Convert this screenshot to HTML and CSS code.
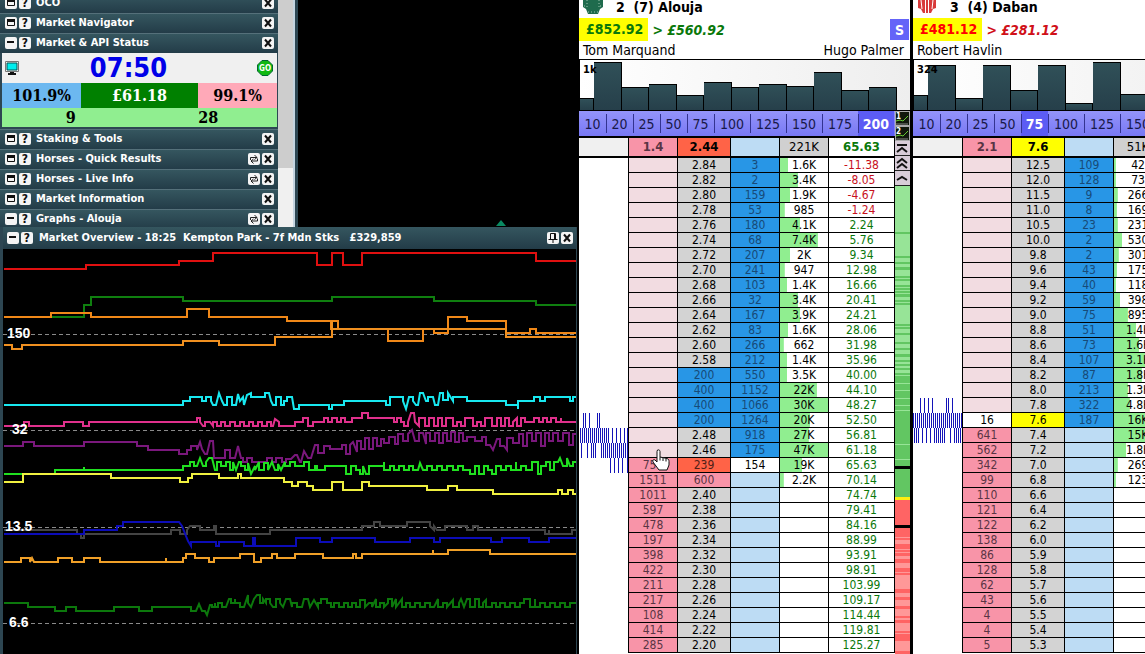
FILE: index.html
```html
<!DOCTYPE html>
<html lang="en">
<head>
    <meta charset="UTF-8">
    <meta name="viewport" content="width=device-width, initial-scale=1.0">
    <title>Market Overview</title>
    <link rel="stylesheet" href="styles.css">
</head>
<body>
    <svg class="symbols" aria-hidden="true">
        <symbol id="restore" viewBox="0 0 12 12"><path d="M2.5 2.5h7v6h-7z" fill="none" stroke="#111"/><path d="M2 2h8v3H2z" fill="#111"/></symbol>
        <symbol id="minimise" viewBox="0 0 12 12"><path d="M2 4h7v2H2z" fill="#111"/></symbol>
        <symbol id="close" viewBox="0 0 12 12"><path d="M3 2.5l6 7M9 2.5l-6 7" stroke="#111" stroke-width="2"/></symbol>
        <symbol id="swap" viewBox="0 0 12 12"><path d="M2.500 7V4.500H9M6.500 2L9 4.500 6.500 6.500M9.500 5.500V8H3M5.500 6L3 8l2.500 2.500" fill="none" stroke="#222"/></symbol>
        <symbol id="pin" viewBox="0 0 12 12"><path d="M3.500 7V1.500h5V7M1.500 7.500h9M6 7.500V11" fill="none" stroke="#111"/><path d="M7 2h1.500v5H7z" fill="#111"/></symbol>
    </svg>

    <div class="desk">
        <div class="top">
            <div class="panels">
                <div class="bar">
                    <button aria-label="Restore"><svg><use href="#restore"/></svg></button><button>?</button>
                    <h2>OCO</h2>
                    <button aria-label="Close"><svg><use href="#close"/></svg></button>
                </div>
                <div class="bar">
                    <button aria-label="Restore"><svg><use href="#restore"/></svg></button><button>?</button>
                    <h2>Market Navigator</h2>
                    <button aria-label="Close"><svg><use href="#close"/></svg></button>
                </div>
                <div class="bar">
                    <button aria-label="Minimise"><svg><use href="#minimise"/></svg></button><button>?</button>
                    <h2>Market &amp; API Status</h2>
                    <button aria-label="Close"><svg><use href="#close"/></svg></button>
                </div>
                <div class="status">
                    <div class="clock">
                        <svg width="16" height="16" viewBox="0 0 16 16"><path d="M1.500 1.500h13v10h-13z" fill="#eee" stroke="#777"/><path d="M3 3h10v7H3z" fill="#0ee" stroke="#055"/><path d="M6 12h4v1h2v2H4v-2h2z" fill="#111"/></svg>
                        <span class="time">07:50</span>
                        <svg width="16" height="16" viewBox="0 0 16 16"><path d="M5 .5h6L15.500 5v6L11 15.500H5L.5 11V5z" fill="#11b811" stroke="#063"/><text class="go" x="8" y="11" text-anchor="middle">GO</text></svg>
                    </div>
                    <div class="books">
                        <span class="book-back">101.9%</span>
                        <span class="book-total">£61.18</span>
                        <span class="book-lay">99.1%</span>
                    </div>
                    <div class="counts"><span>9</span><span>28</span></div>
                </div>
                <div class="bar">
                    <button aria-label="Restore"><svg><use href="#restore"/></svg></button><button>?</button>
                    <h2>Staking &amp; Tools</h2>
                    <button aria-label="Close"><svg><use href="#close"/></svg></button>
                </div>
                <div class="bar">
                    <button aria-label="Restore"><svg><use href="#restore"/></svg></button><button>?</button>
                    <h2>Horses - Quick Results</h2>
                    <button aria-label="Swap"><svg><use href="#swap"/></svg></button><button aria-label="Close"><svg><use href="#close"/></svg></button>
                </div>
                <div class="bar">
                    <button aria-label="Restore"><svg><use href="#restore"/></svg></button><button>?</button>
                    <h2>Horses - Live Info</h2>
                    <button aria-label="Swap"><svg><use href="#swap"/></svg></button><button aria-label="Close"><svg><use href="#close"/></svg></button>
                </div>
                <div class="bar">
                    <button aria-label="Restore"><svg><use href="#restore"/></svg></button><button>?</button>
                    <h2>Market Information</h2>
                    <button aria-label="Close"><svg><use href="#close"/></svg></button>
                </div>
                <div class="bar">
                    <button aria-label="Minimise"><svg><use href="#minimise"/></svg></button><button>?</button>
                    <h2>Graphs - Alouja</h2>
                    <button aria-label="Swap"><svg><use href="#swap"/></svg></button><button aria-label="Close"><svg><use href="#close"/></svg></button>
                </div>
            </div>
            <div class="track"><div class="thumb"></div></div>
            <div class="space"><svg width="10" height="6" viewBox="0 0 10 6"><path d="M5 0l5 6H0z" fill="#0a8a62"/></svg></div>
        </div>

        <div class="overview">
            <div class="bar wide">
                <button aria-label="Minimise"><svg><use href="#minimise"/></svg></button><button>?</button>
                <h2>Market Overview - 18:25 &nbsp;Kempton Park - 7f Mdn Stks &nbsp; £329,859</h2>
                <button aria-label="Pin"><svg><use href="#pin"/></svg></button><button aria-label="Close"><svg><use href="#close"/></svg></button>
            </div>
            <svg class="plot" viewBox="3 249 573 405" preserveAspectRatio="xMinYMin slice">
                <g class="grid"><path d="M3 334.500H576M3 430.500H576M3 527.500H576M3 623.500H576"/></g>
                <g class="lines">
                    <path stroke="#e01010" d="M4 269H86V265H179V261H213V253H317V265H332V253H343V265H362V253H536V261H576"/>
                    <path stroke="#0f7f0f" d="M4 317H84V305H91V297H183V301H332V297H434V301H536V305H576"/>
                    <path stroke="#f08818" d="M4 317H51V313H91V317H187V309H209V317H287V321H331V329H506V333H530V329H536V333H576"/>
                    <path stroke="#f08818" d="M332 321H338V329H388V341H423V329H434V333H448V317H467V321H506V333"/>
                    <path stroke="#f09020" d="M4 345H12V349H22V345H183V341H219V345H275V337H332V321V329H506V337H576"/>
                    <path stroke="#18e8f0" d="M4 405H183V401H190V397H202V401H206V397H211V401L213 405H216L219 393L222 401L224 405H227V397H232V405H236L238 394L240 401L243 397L244 405L247 395L251 393V397H265V393H269L271 401L273 405H276V397H281V405H284V401H287V397H292L294 409H299V405H329V409H332V405H344V401H386V405H390V397H403V401L406 409L409 397H413V401L416 405H418L420 393H423L426 401H428V397H433L435 405H438L440 393H443V400H448V393L453 401V397H467V401H506V405H518V409V401H534V397H540V401H545V397H570V401H573V397H576"/>
                    <path stroke="#e0308c" d="M4 426H24V422H29V426H64V422H83V426H89V422H197V418H200V422L203 426H205V422H210L213 426V422H217V426H221V422H225V426H230V422H235V426H240V422H244V426H249V422H253V426H258V422H262V426H267V422H271V426H273L275 419L279 422V426H295V422H303V418H308V426H313V422H324V418H328V422H332V418H337V422H341V418H345V422H352V418H362V413H368V418H394V422H397V418H401V422H404V426H408V422L411 413H414L415 422L419 426V418H425V426H429V418H434V426H438V418H442V426H446V418H453V426H457V422H461V426H465V418H473V426H477V422H481V426H485V418H492V426H497V418H501V426H505V418H509V426H513V422L517 418V426H521V418H525V422H534V418H539V422H543V418H547V422H551V418H556V422H561V418V422H576"/>
                    <path stroke="#7a187c" d="M4 446H23V442H34V446H84V442H137V446H148V450H179V454H187V450H191V446H197V450L200 442L202 449L205 454H207L210 441H213L214 458H225V450H230V458H235L238 446L241 458H243V462H247V458H252V462H267V458H272V462H276V458H282V462H286V459H291L295 455H297L300 462H301L304 451L308 458H311L315 445H318V453H324V446H330V449H342V445H346V454H350V445L353 442L357 452V441H361V449H365V438H369V449H373V438H377V446H381V439H384V443H389V437H395V444H398V434H403V441H408V434L412 430L415 441H419V433H423L426 444V433H430V441H435V433H439V443H443V433H447V441H451V432H455V442H459V433H463V441H467V437H475V441H482V437H486V445H490L493 450L497 439H500V446H504L507 450V438H513V443H519V434H523V446H527V433H532V441H536V433H541V446H545V433H549V441H553V433H558V441H563V433H569V445H573V434H576"/>
                    <path stroke="#20e020" d="M4 474H55V470H84V467V470H183V466H190V462H194V466H197L200 458L203 466H206V462L209 458H212L215 470H217V462H221V466H226V462H230V470H233V462L236 470L239 462H241V466H245V470H248V463L251 474L255 466V470L259 462V470H264V463H268V470L272 462L275 470H278V464L281 470L285 462V466H290V462H295V466H304V462H309V470H315V466H317V470H325V466H346V474H351V466H356V470H360V474H363V466L366 474H369V466H384V462V470H390V466H394V470H399V466H404V470H409V466H413V470H418L420 463L423 470H427V466H432V470H437V466H442V470H447V466H453V470H458V466H463V470H470V474H475V466H479V474H484V466H488V470H492V474H496V466H501V470H506V466H511V470H516V462V470H521V466H526V470H532V462H538V474H541V466H546V462H550V470H554V462H558L560 458L563 466H567V458L570 466H573V462H576"/>
                    <path stroke="#f0f040" d="M4 482H23V474H111V478H180V482H188V478H192V474H219V478H238V474H241V478H284V482H292V486H298V482H307V486H313V490H332V482H343V490H362V482H369V486H427V490H448V486H457V490H493V494H558V490H562V494H568V490H573V494H576"/>
                    <path stroke="#444" d="M4 530H77V534H81V538H84V534H171V530H180V534H187V530L190 526H200V530H214V526H216V534H270V530H362V526H374V522H380V526H407V522H430V526L434 530V526L437 530H445V526H467V530H473V526H478V530H545V534H549V530V534H572V530H576"/>
                    <path stroke="#0c0cb8" d="M4 534H84V530H117V526H123V522H179L182 526L188 541L191 546V542H216V546H219V542H244V546H253V538H255V546H296V538H320V542H332V538H375V542H410V538H434V542H440V538H491V542H502V538H529V542H549V538H576"/>
                    <path stroke="#f0a028" d="M4 562H21V558H30V562L32 558L34 562H58V558H72V562H84V558H100V562H166V558V562H183V558H186V554H195V558H209V562H214V558H240V554H254V562H261V558H272V554H277V558H295V554H323V558H353V554H356V558H362V554H433V550V554H448V550H490V554H576"/>
                    <path stroke="#0c780c" d="M4 603H28V607H55V611H66V607H76V611H114V607H139V611H152V607H191V611H196L199 604L202 611H205L207 615L210 605H212V607H215V603V607H218V603H222V607H226L229 599H231V603H235V599V603H240V607H244L248 595V603L251 607L254 599L257 595H260V603H263V599L266 603V599H270V603L273 607H276V599H280V603L283 607L286 599H290L292 607V603H297V607H302L304 599H308L310 607L314 600L318 607V603H321V599H327V603H331V607H334V603H339V607H344V603H348V607H352V603H356V607H360V600H365V607L369 603H372V607L376 599V607H380V603H384V607L388 603V599H392V607L396 599V607L402 599V607H406V603H410V607H415V603H420V607H425V603H430V607H434L438 599V607H443V603H447V607L453 600V607H459V603L461 599L464 607L467 599H470V607H475V599H479V607H483V603L486 600V607H492V603H496V607H500V603H505V607H510V603H515V607H520V603H524V599H530V607H535V599V607H540V603H545V607H550V603H555V607H560V603H565V607H570V603H576"/>
                </g>
                <g class="scale">
                    <text x="7" y="338">150</text>
                    <text x="12" y="434">32</text>
                    <text x="5" y="531">13.5</text>
                    <text x="9" y="627">6.6</text>
                </g>
            </svg>
        </div>
    </div>

    <section class="ladder">
        <div class="runner">
            <svg width="22" height="22" viewBox="0 0 22 22"><path d="M1 2h20v13l-3 2-2 5H6l-2-5-3-2z" fill="#1f6b4d"/><path d="M5 8v9M17 8v9M2 14h2M18 14h2M6 20h10" stroke="#9cc5ae" stroke-dasharray="1 2"/></svg>
            <h1>2 &nbsp;(7) Alouja</h1>
        </div>
        <div class="money up"><b>£852.92</b><i>&gt; £560.92</i><button class="stake">S</button></div>
        <div class="people"><span>Tom Marquand</span><span>Hugo Palmer</span></div>
        <div class="volume" data-bars="25,96,46,52,30,56,46,52,48,76,40,46"><span>1k</span></div>
        <div class="book">
            <div class="main">
                <div class="stakes" data-selected="200"></div>
                <table>
                    <colgroup><col class="c-hist"><col class="c-back"><col class="c-price"><col class="c-lay"><col class="c-vol"><col class="c-pl"></colgroup>
                    <thead><tr><th></th><th class="back">1.4</th><th class="last">2.44</th><th class="empty"></th><th class="total">221K</th><th class="up">65.63</th></tr></thead>
                    <tbody id="alouja"></tbody>
                </table>
            </div>
            <div class="gutter">
                <button class="graph" aria-label="Graph 1"><svg viewBox="0 0 14 14"><path d="M1 9l4-1 3 1 5-5" fill="none" stroke="#6c3"/><path d="M1 12h12" stroke="#888"/><text x="1" y="7">1</text></svg></button>
                <button class="graph" aria-label="Graph 2"><svg viewBox="0 0 14 14"><path d="M1 9l4-1 3 1 5-5" fill="none" stroke="#6c3"/><path d="M1 12h12" stroke="#888"/><text x="1" y="7">2</text></svg></button>
                <button aria-label="Top"><svg viewBox="0 0 14 14"><path d="M2 4h10M2 11l5-4 5 4" fill="none" stroke="#111" stroke-width="2"/></svg></button>
                <button aria-label="Page up"><svg viewBox="0 0 14 14"><path d="M2 7l5-4 5 4M2 12l5-4 5 4" fill="none" stroke="#111" stroke-width="2"/></svg></button>
                <button aria-label="Up"><svg viewBox="0 0 14 14"><path d="M2 9l5-3 5 3" fill="none" stroke="#111" stroke-width="2"/></svg></button>
                <svg class="strip" viewBox="0 186 15 468" preserveAspectRatio="none">
                    <path fill="#97e497" d="M0 186h15v187H0z"/>
                    <path fill="#62c662" d="M0 373h15v124H0z"/>
                    <path stroke="#62c662" stroke-width="2" d="M0 233h15M0 257h15M0 263h15M0 268h15M0 269h15M0 277h15M0 280h15M0 286h15M0 289h15M0 292h15M0 295h15M0 296h15M0 301h15M0 304h15M0 325h15M0 328h15M0 334h15M0 343h15M0 349h15M0 355h15M0 356h15M0 361h15M0 365h15M0 369h15"/>
                    <path stroke="#97e497" d="M0 375.500h15M0 383.500h15M0 390.500h15M0 398.500h15M0 405.500h15M0 410.500h15M0 444.500h15M0 459.500h15"/>
                    <path fill="#ffee10" d="M0 497h15v3H0z"/>
                    <path fill="#ff6464" d="M0 500h15v154H0z"/>
                    <path fill="#ff9898" d="M0 537h15v1H0zM0 540h15v4H0zM0 549h15v1H0zM0 552h15v1H0zM0 556h15v3H0zM0 563h15v5H0zM0 572h15v1H0zM0 575h15v14H0zM0 593h15v4H0zM0 600h15v6H0zM0 609h15v7H0zM0 618h15v2H0zM0 623h15v8H0zM0 633h15v1H0zM0 641h15v10H0z"/>
                    <path d="M0 466h15v3H0zM0 525h15v3H0z"/>
                </svg>
            </div>
        </div>
    </section>

    <section class="ladder">
        <div class="runner">
            <svg width="22" height="22" viewBox="0 0 22 22"><path d="M2 2h18v14l-3 1-2 4H7l-2-4-3-1z" fill="#d83a3a"/><path d="M9.500 3v18M12.500 3v18M5 8l1 9M17 8l-1 9" stroke="#fff"/></svg>
            <h1>3 &nbsp;(4) Daban</h1>
        </div>
        <div class="money down"><b>£481.12</b><i>&gt; £281.12</i></div>
        <div class="people"><span>Robert Havlin</span></div>
        <div class="volume" data-bars="30,90,24,90,40,90,14,96,32,50,40,45"><span>324</span></div>
        <div class="book">
            <div class="main">
                <div class="stakes" data-selected="75"></div>
                <table>
                    <colgroup><col class="c-hist"><col class="c-back"><col class="c-price"><col class="c-lay"><col class="c-vol"><col class="c-pl"></colgroup>
                    <thead><tr><th></th><th class="back">2.1</th><th class="match">7.6</th><th class="empty"></th><th class="total">51K</th><th></th></tr></thead>
                    <tbody id="daban"></tbody>
                </table>
            </div>
            <div class="gutter"></div>
        </div>
    </section>

    <script src="script.js"></script>
</body>
</html>
```
FILE: styles.css
```css
body {
    margin: 0;
    height: 100vh;
    display: flex;
    overflow: hidden;
    background-color: #000;
    font-family: "DejaVu Sans Condensed", "DejaVu Sans", sans-serif;
    font-size: 12px;
}
button {
    font-family: inherit;
    border: 0;
    padding: 0;
}
.symbols {
    display: none;
}

/* left side */
.desk {
    flex: 0 0 579px;
    display: flex;
    flex-direction: column;
}
.top {
    flex: 0 0 227px;
    display: flex;
    overflow: hidden;
}
.panels {
    flex: 0 0 278px;
    margin-top: -7px;
    background-color: #2d4652;
}
.bar {
    height: 20px;
    box-sizing: border-box;
    display: flex;
    align-items: center;
    gap: 2px;
    padding: 0 4px 2px 5px;
    border-top: 1px solid #55707a;
    background-image: linear-gradient(#35565f, #233c48);
}
.bar h2 {
    flex: 1;
    margin: 0 0 0 3px;
    font-size: 11px;
    line-height: 16px;
    color: #fff;
    white-space: nowrap;
}
.bar button {
    width: 12px;
    height: 12px;
    border-radius: 2px;
    background-color: #f4f4f4;
    font-size: 12px;
    font-weight: bold;
    line-height: 12px;
    color: #111;
}
.bar svg {
    display: block;
    width: 12px;
    height: 12px;
}
.status {
    padding: 0 1px 2px 2px;
    font-family: "DejaVu Serif Condensed", "DejaVu Serif", serif;
    font-weight: bold;
    font-size: 16px;
    text-align: center;
}
.clock {
    display: flex;
    align-items: center;
    height: 30px;
    padding: 0 4px 0 2px;
    background-color: #f0f0f0;
}
.time {
    flex: 1;
    padding-right: 20px;
    font-family: "DejaVu Sans Condensed", "DejaVu Sans", sans-serif;
    font-size: 27px;
    line-height: 30px;
    color: #0000e8;
}
.go {
    font-family: "DejaVu Sans Condensed", sans-serif;
    font-size: 8px;
    fill: #fff;
}
.books {
    display: grid;
    grid-template-columns: 79fr 117fr 79fr;
    line-height: 25px;
}
.book-back {
    background-color: #6cb8f0;
}
.book-total {
    background-color: #008000;
    color: #fff;
}
.book-lay {
    background-color: #ffa9b8;
}
.counts {
    display: grid;
    grid-template-columns: 1fr 1fr;
    line-height: 19px;
    background-color: #90ee90;
}
.track {
    flex: 0 0 15px;
    background-color: #f0f0f0;
    border-right: 2px solid #c4d4e0;
}
.thumb {
    height: 168px;
    background-color: #cdcdcd;
}
.space {
    flex: 1;
    display: flex;
    align-items: flex-end;
    justify-content: center;
    padding: 0 0 1px 125px;
    border-left: 3px solid #2d4652;
}
.overview {
    flex: 1;
    min-height: 0;
    display: flex;
    flex-direction: column;
    margin-right: 2px;
    border: solid #2d4652;
    border-width: 0 1px 0 3px;
}
.wide {
    flex: 0 0 22px;
    padding: 0 3px 0 4px;
    border-top: 0;
}
.wide h2 {
    margin-left: 4px;
}
.plot {
    flex: 1;
    min-height: 0;
    width: 100%;
    background-color: #000;
}
.grid path {
    fill: none;
    stroke: #8a8a8a;
    stroke-dasharray: 4 3;
}
.lines path {
    fill: none;
    stroke-width: 2;
}
.scale text {
    font-family: "Liberation Sans", Arial, sans-serif;
    font-size: 14px;
    font-weight: bold;
    fill: #fff;
}

/* ladders */
.ladder {
    flex: 0 0 331px;
    display: flex;
    flex-direction: column;
    border-right: 3px solid #000;
    background-color: #fff;
}
.ladder:last-of-type {
    flex: 0 1 331px;
    min-width: 0;
    overflow: hidden;
    border-right: 0;
}
.runner {
    height: 18px;
    display: flex;
    align-items: flex-end;
    gap: 12px;
    padding-left: 3px;
}
.runner svg {
    margin-bottom: 4px;
}
.runner h1 {
    margin: 0;
    font-size: 14px;
    line-height: 22px;
}
.money {
    height: 23px;
    display: flex;
    align-items: center;
    font-size: 14px;
}
.money b {
    padding: 0 5px 0 7px;
    line-height: 23px;
    background-color: #ff0;
}
.money i {
    flex: 1;
    padding-left: 4px;
    font-weight: bold;
}
.up {
    color: #0a780a;
}
.down i {
    color: #d01018;
}
.down b {
    color: #f00;
}
.stake {
    width: 19px;
    height: 21px;
    margin-right: 1px;
    background-color: #6464f8;
    color: #fff;
    font-size: 14px;
    font-weight: bold;
}
.people {
    display: flex;
    justify-content: space-between;
    padding: 0 6px 0 4px;
    font-size: 14px;
    line-height: 18px;
}
.volume {
    position: relative;
    flex: 0 0 50px;
    width: 317px;
    display: flex;
    align-items: flex-end;
    padding-right: 13px;
    border: solid #000;
    border-width: 1px 0 1px 1px;
    background-image: linear-gradient(90deg, #fff, #eee);
}
.volume span {
    position: absolute;
    left: 3px;
    top: 3px;
    font-size: 11px;
    font-weight: bold;
    line-height: 14px;
}
.volume div {
    flex: 2;
    box-sizing: border-box;
    border: solid #000;
    border-width: 1px 1px 0 0;
    background-image: linear-gradient(#305058, #263f4a);
}
.volume div:first-of-type {
    flex: 1;
}
.book {
    flex: 1;
    min-height: 0;
    display: flex;
}
.main {
    flex: 0 0 316px;
}
.stakes {
    display: grid;
    grid-template-columns: repeat(5, 3fr) repeat(5, 4fr);
    padding-right: 1px;
    border-bottom: 2px solid #000;
    background-image: linear-gradient(#9494fa, #7878f4);
}
.stakes button {
    height: 25px;
    background-color: transparent;
    font-size: 14px;
    color: #181848;
}
.stakes button + button {
    background-image: linear-gradient(#333390, #333390);
    background-size: 1px 19px;
    background-position: 0 3px;
    background-repeat: no-repeat;
}
.stakes .selected {
    background-color: #5c5cf4;
    font-weight: bold;
    color: #fff;
}
table {
    width: 100%;
    table-layout: fixed;
    border-collapse: separate;
    border-spacing: 0;
}
.c-hist { width: 50px; }
.c-back { width: 49px; }
.c-price { width: 53px; }
.c-lay { width: 49px; }
.c-vol { width: 49px; }
.c-pl { width: 66px; }
th, td {
    padding: 0;
    text-align: center;
    border: solid #000;
    border-width: 0 1px 1px 0;
}
th {
    height: 18px;
    line-height: 18px;
    font-size: 13px;
    border-bottom-width: 2px;
}
th:first-child {
    background-color: #f0f0f0;
}
td {
    height: 14px;
    line-height: 14px;
}
.history {
    border-bottom: 0;
    background-color: #fff;
}
.history svg {
    display: block;
    width: 49px;
    height: 15px;
    stroke: #1414b8;
    shape-rendering: crispEdges;
}
.thin {
    background-color: #f2dce1;
}
.back {
    background-color: #f894a8;
    color: #5a3444;
}
.price {
    background-color: #d3d3d3;
}
.lay {
    background-color: #2896e6;
    color: #174a78;
}
.empty {
    background-color: #bddcf4;
}
.last {
    background-color: #ff6347;
}
td.last {
    color: #502018;
}
.match {
    background-color: #ff0;
}
.total {
    background-color: #d0d0d0;
    font-weight: normal;
}
.traded {
    background-image: linear-gradient(#90ee90, #90ee90);
    background-repeat: no-repeat;
}
.plus {
    color: #0a780a;
}
.minus {
    color: #c8101c;
}
.pointed {
    position: relative;
}
.cursor {
    position: absolute;
    left: 22px;
    top: -9px;
}
.gutter {
    flex: 0 0 15px;
    display: flex;
    flex-direction: column;
}
.gutter button {
    flex: 0 0 15px;
    border-bottom: 1px solid #222;
    background-color: #d8ccd8;
}
.gutter button svg {
    display: block;
    width: 14px;
    height: 14px;
}
.gutter .graph {
    border: 1px solid #aaa;
    background-color: #10180c;
}
.graph svg {
    margin: -1px;
}
.graph text {
    font-size: 8px;
    font-weight: bold;
    fill: #fff;
}
.strip {
    flex: 1;
    min-height: 0;
    width: 15px;
}
```
FILE: script.js
```js
// price rows: [back, price, lay, traded, traded bar width in %, p/l, price cell class]
const alouja = [
    ['', '2.84', '3', '1.6K', 17, '-11.38'],
    ['', '2.82', '2', '3.4K', 38, '-8.05'],
    ['', '2.80', '159', '1.9K', 21, '-4.67'],
    ['', '2.78', '53', '985', 10, '-1.24'],
    ['', '2.76', '180', '4.1K', 42, '2.24'],
    ['', '2.74', '68', '7.4K', 79, '5.76'],
    ['', '2.72', '207', '2K', 21, '9.34'],
    ['', '2.70', '241', '947', 10, '12.98'],
    ['', '2.68', '103', '1.4K', 15, '16.66'],
    ['', '2.66', '32', '3.4K', 38, '20.41'],
    ['', '2.64', '167', '3.9K', 42, '24.21'],
    ['', '2.62', '83', '1.6K', 17, '28.06'],
    ['', '2.60', '266', '662', 8, '31.98'],
    ['', '2.58', '212', '1.4K', 15, '35.96'],
    ['', '200', '550', '3.5K', 15, '40.00', 'lay'],
    ['', '400', '1152', '22K', 77, '44.10', 'lay'],
    ['', '400', '1066', '30K', 100, '48.27', 'lay'],
    ['', '200', '1264', '20K', 63, '52.50', 'lay'],
    ['', '2.48', '918', '27K', 60, '56.81'],
    ['', '2.46', '175', '47K', 100, '61.18'],
    ['751', '239', '154', '19K', 46, '65.63', 'last'],
    ['1511', '600', '', '2.2K', 8, '70.14', 'back'],
    ['1011', '2.40', '', '', 0, '74.74'],
    ['597', '2.38', '', '', 0, '79.41'],
    ['478', '2.36', '', '', 0, '84.16'],
    ['197', '2.34', '', '', 0, '88.99'],
    ['398', '2.32', '', '', 0, '93.91'],
    ['422', '2.30', '', '', 0, '98.91'],
    ['211', '2.28', '', '', 0, '103.99'],
    ['217', '2.26', '', '', 0, '109.17'],
    ['108', '2.24', '', '', 0, '114.44'],
    ['414', '2.22', '', '', 0, '119.81'],
    ['285', '2.20', '', '', 0, '125.27']
];

const daban = [
    ['', '12.5', '109', '42', 4, ''],
    ['', '12.0', '128', '73', 4, ''],
    ['', '11.5', '9', '266', 8, ''],
    ['', '11.0', '8', '169', 6, ''],
    ['', '10.5', '23', '231', 8, ''],
    ['', '10.0', '2', '530', 17, ''],
    ['', '9.8', '2', '301', 10, ''],
    ['', '9.6', '43', '175', 6, ''],
    ['', '9.4', '40', '118', 4, ''],
    ['', '9.2', '59', '398', 13, ''],
    ['', '9.0', '75', '895', 29, ''],
    ['', '8.8', '51', '1.4K', 46, ''],
    ['', '8.6', '73', '1.6K', 52, ''],
    ['', '8.4', '107', '3.1K', 90, ''],
    ['', '8.2', '87', '1.8K', 58, ''],
    ['', '8.0', '213', '1.3K', 29, ''],
    ['', '7.8', '322', '4.8K', 33, ''],
    ['16', '7.6', '187', '16K', 100, '', 'match'],
    ['641', '7.4', '', '15K', 100, ''],
    ['562', '7.2', '', '1.8K', 25, ''],
    ['342', '7.0', '', '269', 8, ''],
    ['99', '6.8', '', '123', 4, ''],
    ['110', '6.6', '', '', 0, ''],
    ['121', '6.4', '', '', 0, ''],
    ['122', '6.2', '', '', 0, ''],
    ['138', '6.0', '', '', 0, ''],
    ['86', '5.9', '', '', 0, ''],
    ['128', '5.8', '', '', 0, ''],
    ['62', '5.7', '', '', 0, ''],
    ['43', '5.6', '', '', 0, ''],
    ['4', '5.5', '', '', 0, ''],
    ['4', '5.4', '', '', 0, ''],
    ['5', '5.3', '', '', 0, '']
];

// x positions of the last matched bets, by row
const aloujaTicks = {
    17: [4, 6, 10, 18, 20],
    18: [1, 3, 5, 7, 9, 11, 13, 15, 17, 19, 21, 23, 25, 27, 29, 33, 37, 41, 45, 48],
    19: [2, 8, 12, 14, 16, 22, 24, 26, 28, 30, 32, 34, 36, 38, 40, 42, 44, 46, 48],
    20: [31, 35, 39, 43, 48]
};
const dabanTicks = {
    16: [7, 11, 15, 19, 33, 35, 39],
    17: [0, 2, 4, 6, 8, 10, 12, 14, 16, 18, 20, 22, 24, 26, 28, 30, 32, 34, 36, 38, 40, 42, 44, 46, 48],
    18: [1, 3, 5, 9, 13, 17, 21, 23, 25, 27, 29, 31, 37, 41, 43, 45, 47]
};

const hand = '<svg class="cursor" width="20" height="22" viewBox="0 0 20 22"><path d="M6.500 1C7.500.5 9 1 9 2.500V8l7 1.500c1.500.5 2 1.500 2 3V16l-2 5H8l-6-8c-1-2 1-3 2-2l2 2V2.500z" fill="#fff" stroke="#111"/><path d="M12 8.500V12M15 9.500V12.500M9 8V11.500" stroke="#111"/></svg>';

function ticksSvg(ticks) {
    if (!ticks) return '';
    const d = ticks.map(x => `M${x + 0.5} 0v15`).join('');
    return `<svg viewBox="0 0 49 15"><path d="${d}"/></svg>`;
}

function fillLadder(id, rows, ticks, pointer) {
    let html = '';
    rows.forEach(([back, price, lay, traded, width, pl, kind], i) => {
        const backClass = back === '' ? 'thin' : (kind === 'match' ? '' : 'back');
        const layClass = lay === '' ? 'empty' : (kind === 'last' ? '' : 'lay');
        const cursor = i === pointer ? hand : '';
        html += `<tr>
            <td class="history">${ticksSvg(ticks[i])}</td>
            <td class="${backClass} ${cursor ? 'pointed' : ''}">${back}${cursor}</td>
            <td class="${kind || 'price'}">${price}</td>
            <td class="${layClass}">${lay}</td>
            <td class="traded" style="background-size: ${width}% 100%">${traded}</td>
            <td class="${pl.startsWith('-') ? 'minus' : 'plus'}">${pl}</td>
        </tr>`;
    });
    document.getElementById(id).innerHTML = html;
}

fillLadder('alouja', alouja, aloujaTicks, 20);
fillLadder('daban', daban, dabanTicks, -1);

document.querySelectorAll('.stakes').forEach(bar => {
    [10, 20, 25, 50, 75, 100, 125, 150, 175, 200].forEach(stake => {
        const button = document.createElement('button');
        button.innerText = stake;
        if (bar.dataset.selected === String(stake)) button.className = 'selected';
        bar.appendChild(button);
    });
});

document.querySelectorAll('.volume').forEach(chart => {
    const label = chart.querySelector('span');
    chart.dataset.bars.split(',').forEach(height => {
        const bar = document.createElement('div');
        bar.style.height = height + '%';
        chart.insertBefore(bar, label);
    });
});
```
